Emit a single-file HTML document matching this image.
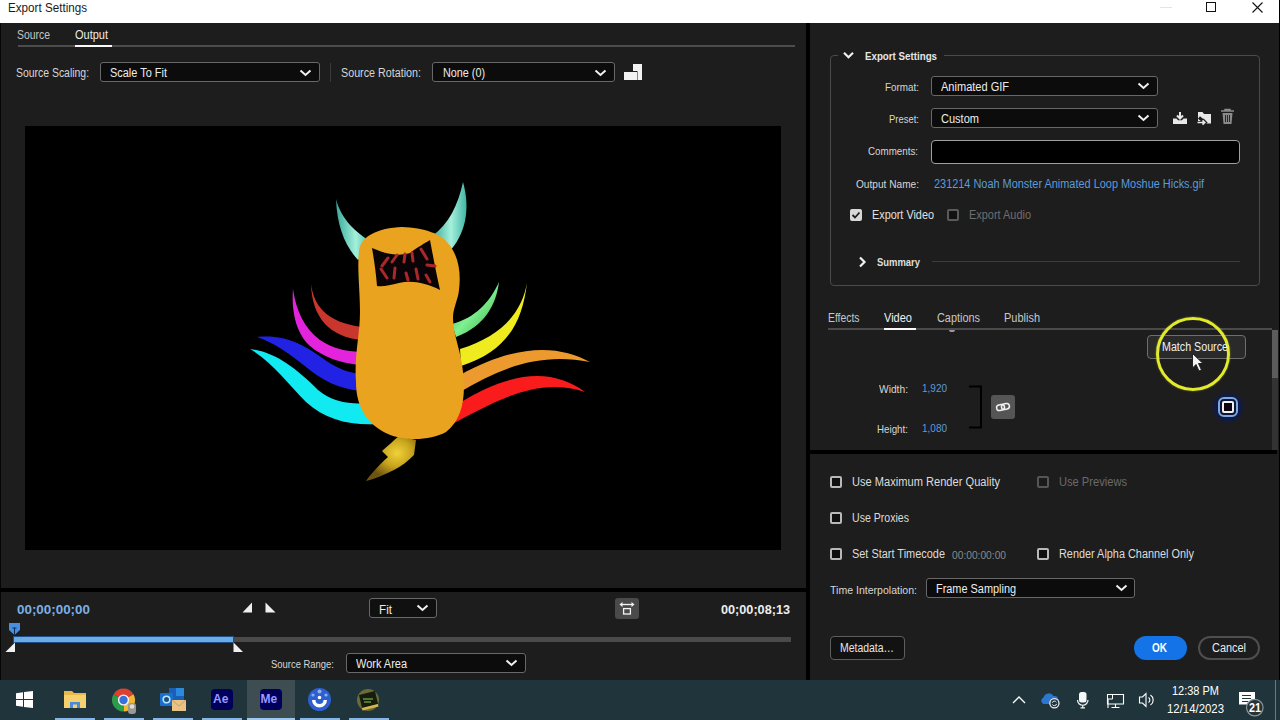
<!DOCTYPE html>
<html><head><meta charset="utf-8">
<style>
*{margin:0;padding:0;box-sizing:border-box}
html,body{width:1280px;height:720px;overflow:hidden;background:#1d1d1d;font-family:'Liberation Sans', sans-serif}
.a{position:absolute}
.t{position:absolute;white-space:nowrap;transform-origin:0 0}
.dd{position:absolute;background:#0c0c0c;border:1px solid #686868;border-radius:3px}
.cb{position:absolute;width:12px;height:12px;border:2px solid #b8b8b8;border-radius:2px;background:#0f0f0f}
</style></head><body>
<!-- title bar -->
<div class="a" style="left:0;top:0;width:1280px;height:23px;background:#ffffff"></div>
<div class="a" style="left:1160px;top:7px;width:12px;height:1px;background:#e4e4e4"></div>
<div class="a" style="left:1206px;top:2px;width:10px;height:10px;border:1px solid #111"></div>
<svg class="a" style="left:1251px;top:1px" width="13" height="13" viewBox="0 0 13 13"><path d="M1.5 1.5L11.5 11.5M11.5 1.5L1.5 11.5" stroke="#111" stroke-width="1.1"/></svg>

<!-- window borders -->
<div class="a" style="left:0;top:23px;width:1px;height:657px;background:#050505"></div>
<div class="a" style="left:1279px;top:0;width:1px;height:680px;background:#000"></div>

<!-- dividers -->
<div class="a" style="left:806px;top:23px;width:4px;height:657px;background:#000"></div>
<div class="a" style="left:0;top:588px;width:806px;height:4px;background:#000"></div>
<div class="a" style="left:810px;top:450px;width:467px;height:4px;background:#000"></div>

<!-- left tabs -->
<div class="a" style="left:18px;top:45px;width:777px;height:2px;background:#4c4c4c"></div>
<div class="a" style="left:75px;top:45px;width:37px;height:2px;background:#fafafa"></div>

<!-- source scaling / rotation -->
<div class="dd" style="left:100px;top:62px;width:220px;height:20px"></div>
<svg class="a" style="left:299px;top:69px" width="13" height="8" viewBox="0 0 13 8"><path d="M1.5 1.5L6.5 6L11.5 1.5" fill="none" stroke="#f0f0f0" stroke-width="2"/></svg>
<div class="a" style="left:330px;top:63px;width:1px;height:19px;background:#3a3a3a"></div>
<div class="dd" style="left:432px;top:62px;width:183px;height:20px"></div>
<svg class="a" style="left:594px;top:69px" width="13" height="8" viewBox="0 0 13 8"><path d="M1.5 1.5L6.5 6L11.5 1.5" fill="none" stroke="#f0f0f0" stroke-width="2"/></svg>
<svg class="a" style="left:623px;top:63px" width="20" height="18" viewBox="0 0 20 18"><rect x="10" y="1" width="9" height="16" fill="#f2f2f2"/><rect x="0.5" y="8" width="14" height="9" fill="#1d1d1d"/><rect x="1" y="9" width="13" height="8" fill="#f2f2f2"/></svg>

<!-- video area -->
<div class="a" style="left:25px;top:126px;width:756px;height:424px;background:#000"></div>

<!-- bottom-left controls -->
<svg class="a" style="left:242px;top:602px" width="11" height="11" viewBox="0 0 11 11"><path d="M10 0.5V10.5H0.5Z" fill="#f0f0f0"/></svg>
<svg class="a" style="left:265px;top:602px" width="11" height="11" viewBox="0 0 11 11"><path d="M0.5 0.5V10.5H10.5Z" fill="#f0f0f0"/></svg>
<div class="dd" style="left:369px;top:598px;width:68px;height:20px;background:#101010"></div>
<svg class="a" style="left:416px;top:604px" width="13" height="8" viewBox="0 0 13 8"><path d="M1.5 1.5L6.5 6L11.5 1.5" fill="none" stroke="#f0f0f0" stroke-width="2"/></svg>
<div class="a" style="left:615px;top:598px;width:24px;height:21px;background:#4a4a4a;border-radius:3px"></div>
<svg class="a" style="left:615px;top:598px" width="24" height="21" viewBox="0 0 24 21"><path d="M7 6.5H17" stroke="#f4f4f4" stroke-width="1.3"/><path d="M4.5 6.5L7.5 4V9ZM19.5 6.5L16.5 4V9Z" fill="#f4f4f4"/><rect x="8.6" y="10.6" width="6.8" height="5.4" fill="none" stroke="#f4f4f4" stroke-width="1.3"/></svg>

<!-- timeline -->
<div class="a" style="left:14px;top:637px;width:777px;height:5px;background:#4a4a4a"></div>
<div class="a" style="left:13px;top:636px;width:221px;height:7px;background:#1d4f86"></div>
<div class="a" style="left:14px;top:637px;width:219px;height:5px;background:#6aace8"></div>
<svg class="a" style="left:8px;top:622px" width="13" height="15" viewBox="0 0 13 15"><path d="M1 1H12V8L6.5 13L1 8Z" fill="#4a8ee0"/><path d="M4.5 6H8.5M6.5 6V13" stroke="#0c2a50" stroke-width="1"/></svg>
<svg class="a" style="left:5px;top:642px" width="11" height="11" viewBox="0 0 11 11"><path d="M10 0.5V10H0.5Z" fill="#f0f0f0"/></svg>
<svg class="a" style="left:233px;top:642px" width="11" height="11" viewBox="0 0 11 11"><path d="M0.5 0.5V10H10Z" fill="#f0f0f0"/></svg>
<div class="dd" style="left:346px;top:653px;width:180px;height:20px"></div>
<svg class="a" style="left:505px;top:659px" width="13" height="8" viewBox="0 0 13 8"><path d="M1.5 1.5L6.5 6L11.5 1.5" fill="none" stroke="#f0f0f0" stroke-width="2"/></svg>

<!-- export settings box -->
<div class="a" style="left:830px;top:55px;width:430px;height:231px;border:1px solid #4a4a4a;border-radius:4px"></div>
<div class="a" style="left:838px;top:50px;width:106px;height:10px;background:#1d1d1d"></div>
<svg class="a" style="left:842px;top:51px" width="13" height="9" viewBox="0 0 13 9"><path d="M2 1.8L6.5 6.3L11 1.8" fill="none" stroke="#f0f0f0" stroke-width="2.2"/></svg>
<div class="dd" style="left:931px;top:76px;width:227px;height:20px"></div>
<svg class="a" style="left:1137px;top:82px" width="13" height="8" viewBox="0 0 13 8"><path d="M1.5 1.5L6.5 6L11.5 1.5" fill="none" stroke="#f0f0f0" stroke-width="2"/></svg>
<div class="dd" style="left:931px;top:108px;width:227px;height:20px"></div>
<svg class="a" style="left:1137px;top:114px" width="13" height="8" viewBox="0 0 13 8"><path d="M1.5 1.5L6.5 6L11.5 1.5" fill="none" stroke="#f0f0f0" stroke-width="2"/></svg>
<!-- preset icons -->
<svg class="a" style="left:1172px;top:109px" width="16" height="16" viewBox="0 0 16 16"><path d="M8 3V9M5 6.5L8 9.5L11 6.5" fill="none" stroke="#e8e8e8" stroke-width="2"/><path d="M1 9.5H4.5L6 11.2H10L11.5 9.5H15V15H1Z" fill="#e8e8e8"/></svg>
<svg class="a" style="left:1196px;top:109px" width="17" height="17" viewBox="0 0 17 17"><path d="M2 3H6.5L8 5H15V14.5H2Z" fill="#e8e8e8"/><path d="M3 8.5L9 13.5M1 13.5H9M6.5 10.5L9.5 13.5L6.5 16.5" fill="none" stroke="#1d1d1d" stroke-width="3"/><path d="M1.5 13.5H8.5M6.5 11.3L8.8 13.5L6.5 15.7" fill="none" stroke="#e8e8e8" stroke-width="1.6"/></svg>
<svg class="a" style="left:1220px;top:108px" width="15" height="17" viewBox="0 0 15 17"><path d="M1 3H14M5 3V1.5H10V3" fill="none" stroke="#8a8a8a" stroke-width="1.5"/><path d="M2.5 5H12.5L11.5 16H3.5Z" fill="#8a8a8a"/><path d="M5.5 7V14M7.5 7V14M9.5 7V14" stroke="#1d1d1d" stroke-width="0.9"/></svg>
<div class="a" style="left:931px;top:140px;width:309px;height:24px;background:#000;border:1px solid #a0a0a0;border-radius:4px"></div>
<!-- export video/audio checkboxes -->
<div class="a" style="left:850px;top:209px;width:12px;height:12px;background:#d8d8d8;border-radius:2px"></div>
<svg class="a" style="left:850px;top:209px" width="12" height="12" viewBox="0 0 12 12"><path d="M2.5 6L5 8.5L9.5 3.5" fill="none" stroke="#1d1d1d" stroke-width="1.8"/></svg>
<div class="cb" style="left:947px;top:209px;border-color:#5a5a5a;background:#121212"></div>
<!-- summary -->
<svg class="a" style="left:858px;top:256px" width="9" height="12" viewBox="0 0 9 12"><path d="M2 1.5L6.5 6L2 10.5" fill="none" stroke="#f0f0f0" stroke-width="2.2"/></svg>
<div class="a" style="left:932px;top:260.5px;width:308px;height:1.5px;background:#3c3c3c"></div>

<!-- right tabs -->
<div class="a" style="left:828px;top:328px;width:444px;height:2px;background:#4a4a4a"></div>
<div class="a" style="left:884px;top:328px;width:32px;height:2px;background:#fafafa"></div>
<div class="a" style="left:949px;top:330px;width:6px;height:2px;background:#9a9a9a;border-radius:0 0 3px 3px"></div>
<!-- scrollbar -->
<div class="a" style="left:1272px;top:330px;width:6px;height:120px;background:#333"></div>
<div class="a" style="left:1272px;top:330px;width:6px;height:48px;background:#5c5c5c"></div>

<!-- match source -->
<div class="a" style="left:1147px;top:335px;width:99px;height:24px;background:#2a2a2a;border:1px solid #6e6e6e;border-radius:4px"></div>
<!-- bracket -->
<svg class="a" style="left:968px;top:384px" width="16" height="46" viewBox="0 0 16 46"><path d="M1 2.5H13V43.5H1" fill="none" stroke="#000" stroke-width="2"/></svg>
<div class="a" style="left:991px;top:395px;width:24px;height:24px;background:#555;border-radius:3px"></div>
<svg class="a" style="left:991px;top:395px" width="24" height="24" viewBox="0 0 24 24"><g transform="rotate(-12 12 12)"><rect x="5.5" y="9.2" width="8" height="5.6" rx="2.8" fill="none" stroke="#f0f0f0" stroke-width="1.5"/><rect x="10.5" y="9.2" width="8" height="5.6" rx="2.8" fill="none" stroke="#f0f0f0" stroke-width="1.5"/></g></svg>
<!-- toggle icon -->
<div class="a" style="left:1211px;top:391px;width:34px;height:33px;border-radius:10px;background:radial-gradient(#0c1a50 45%,rgba(20,16,80,0) 72%)"></div>
<div class="a" style="left:1218px;top:397px;width:20px;height:20px;border:2px solid #7ea8dc;border-radius:6px;background:#0a1636"></div>
<div class="a" style="left:1222px;top:401px;width:12px;height:12px;border:2px solid #f0f0f0;border-radius:2px;background:#0a0510"></div>

<!-- bottom-right checkboxes -->
<div class="cb" style="left:830px;top:476px"></div>
<div class="cb" style="left:1037px;top:476px;border-color:#555;background:#1a1a1a"></div>
<div class="cb" style="left:830px;top:512px"></div>
<div class="cb" style="left:830px;top:548px"></div>
<div class="cb" style="left:1037px;top:548px"></div>
<div class="dd" style="left:926px;top:578px;width:209px;height:20px"></div>
<svg class="a" style="left:1115px;top:584px" width="13" height="8" viewBox="0 0 13 8"><path d="M1.5 1.5L6.5 6L11.5 1.5" fill="none" stroke="#f0f0f0" stroke-width="2"/></svg>
<!-- buttons -->
<div class="a" style="left:830px;top:636px;width:75px;height:24px;border:1px solid #5e5e5e;border-radius:4px;background:#121212"></div>
<div class="a" style="left:1134px;top:636px;width:53px;height:24px;border-radius:12px;background:#1473e6"></div>
<div class="a" style="left:1198px;top:636px;width:62px;height:24px;border:2px solid #4e4e4e;border-radius:12px"></div>

<!-- yellow highlight + cursor -->
<div class="a" style="left:1156px;top:317px;width:74px;height:74px;border:3px solid #e2ea2c;border-radius:50%;box-shadow:0 0 2px rgba(226,234,44,.5)"></div>
<svg class="a" style="left:1191px;top:352px" width="14" height="22" viewBox="0 0 14 22"><path d="M1.5 1.5V16L5 12.5L8 19L10.5 18L7.5 11.5H12Z" fill="#f4f4f4" stroke="#222" stroke-width="1"/></svg>

<!-- taskbar -->
<div class="a" style="left:0;top:680px;width:1280px;height:40px;background:#20353b"></div>
<div class="a" style="left:247px;top:680px;width:48px;height:40px;background:#3d4d52"></div>
<!-- indicators -->
<div class="a" style="left:55px;top:718px;width:40px;height:2px;background:#86b6e6"></div>
<div class="a" style="left:104px;top:718px;width:40px;height:2px;background:#86b6e6"></div>
<div class="a" style="left:153px;top:718px;width:40px;height:2px;background:#86b6e6"></div>
<div class="a" style="left:202px;top:718px;width:40px;height:2px;background:#86b6e6"></div>
<div class="a" style="left:247px;top:718px;width:48px;height:2px;background:#9cc8f0"></div>
<div class="a" style="left:300px;top:718px;width:40px;height:2px;background:#86b6e6"></div>
<div class="a" style="left:349px;top:718px;width:40px;height:2px;background:#86b6e6"></div>
<!-- windows logo -->
<svg class="a" style="left:16px;top:691px" width="17" height="17" viewBox="0 0 17 17"><path d="M0 2.3L7 1.3V8H0ZM8 1.1L17 0V8H8ZM0 9H7V15.7L0 14.7ZM8 9H17V17L8 15.9Z" fill="#fff"/></svg>
<!-- explorer -->
<svg class="a" style="left:63px;top:689px" width="24" height="20" viewBox="0 0 24 20"><path d="M1 2H9L11 4H23V19H1Z" fill="#e6b94a"/><rect x="1" y="6" width="22" height="13" fill="#f4d16e"/><path d="M7 19V13H17V19H14V15.5H10V19Z" fill="#4a8ad8"/></svg>
<!-- chrome -->
<svg class="a" style="left:111px;top:688px" width="26" height="27" viewBox="0 0 26 27"><path d="M12.5,12 L2.54,6.25 A11.5,11.5 0 0 1 22.46,6.25 Z" fill="#dc4030"/><path d="M12.5,12 L22.46,6.25 A11.5,11.5 0 0 1 12.5,23.5 Z" fill="#f2b832"/><path d="M12.5,12 L12.5,23.5 A11.5,11.5 0 0 1 2.54,6.25 Z" fill="#2c9c48"/><circle cx="12.5" cy="12" r="5.6" fill="#f4f4f4"/><circle cx="12.5" cy="12" r="4.2" fill="#3a70d8"/><rect x="17" y="15" width="8" height="11" rx="3" fill="#9a9890"/><circle cx="21" cy="18.5" r="2.3" fill="#e0ddd4"/></svg>
<!-- outlook -->
<svg class="a" style="left:159px;top:687px" width="28" height="26" viewBox="0 0 28 26"><rect x="10" y="1" width="15" height="16" fill="#1a5fb4"/><rect x="17" y="1" width="8" height="8" fill="#2a8ae0"/><rect x="1" y="6" width="13" height="13" rx="1" fill="#1a6ed0"/><circle cx="7.5" cy="12.5" r="3.3" fill="#1a4f8a" stroke="#b8e8ff" stroke-width="1.6"/><rect x="13" y="13" width="14" height="11" fill="#e8c383"/><path d="M13 13L20 19L27 13" fill="none" stroke="#c9a062" stroke-width="1"/></svg>
<!-- Ae -->
<div class="a" style="left:211px;top:689px;width:22px;height:21px;background:#00005b;border-radius:4px"></div>
<div class="t" style="left:213px;top:693px;font-size:12px;line-height:12px;font-weight:700;color:#9999ff">Ae</div>
<!-- Me -->
<div class="a" style="left:260px;top:689px;width:22px;height:21px;background:#00005b;border-radius:4px"></div>
<div class="t" style="left:260.5px;top:693px;font-size:12px;line-height:12px;font-weight:700;color:#9999ff">Me</div>
<!-- blue circle app -->
<svg class="a" style="left:307px;top:687px" width="25" height="25" viewBox="0 0 25 25"><circle cx="12.5" cy="12.5" r="11.5" fill="#2c5fd0"/><path d="M5 13A7.5 7.5 0 0 0 20 13H16.5A4 4 0 0 1 8.5 13Z" fill="#fff"/><circle cx="12.5" cy="10.5" r="1.8" fill="#fff"/><circle cx="12.5" cy="4.5" r="2" fill="#8fb0f0"/><circle cx="6" cy="8" r="1.6" fill="#8fb0f0"/><circle cx="19" cy="8" r="1.6" fill="#8fb0f0"/></svg>
<!-- green app -->
<svg class="a" style="left:355px;top:687px" width="26" height="26" viewBox="0 0 26 26"><circle cx="13" cy="13" r="11" fill="#6b6b3a"/><path d="M4 8L20 4L23 17L7 21Z" fill="#161c10"/><path d="M7 21L23 17L23.5 19.5L7.5 23.5Z" fill="#d8b84a"/><path d="M8 12H18M9 15H16" stroke="#8fd04a" stroke-width="1.2"/></svg>

<!-- tray -->
<svg class="a" style="left:1012px;top:695px" width="14" height="9" viewBox="0 0 14 9"><path d="M1 8L7 2L13 8" fill="none" stroke="#fff" stroke-width="1.3"/></svg>
<svg class="a" style="left:1040px;top:690px" width="20" height="20" viewBox="0 0 20 20"><path d="M3.5 14A3.5 3.5 0 0 1 3.5 7.5A5.5 5.5 0 0 1 13.5 6A4 4 0 0 1 15 14Z" fill="#2d78cc"/><circle cx="14.4" cy="13.3" r="4.6" fill="#20353b" stroke="#e8eef2" stroke-width="1.3"/><path d="M12.2 12.8A2.3 2.3 0 0 1 16.4 12.2M16.6 13.9A2.3 2.3 0 0 1 12.3 14.4" fill="none" stroke="#e8eef2" stroke-width="1"/></svg>
<svg class="a" style="left:1076px;top:691px" width="14" height="18" viewBox="0 0 14 18"><rect x="3" y="1" width="7.5" height="10.5" rx="2.5" fill="#f4f6f8"/><path d="M1.5 9A5.25 5.25 0 0 0 12 9M6.75 14.5V16.5M4.5 16.8H9" fill="none" stroke="#f4f6f8" stroke-width="1.2"/></svg>
<svg class="a" style="left:1106px;top:693px" width="19" height="16" viewBox="0 0 19 16"><path d="M1.5 1.5H17.5V11H1.5Z" fill="none" stroke="#fff" stroke-width="1.1"/><path d="M9.5 11V14.5M5.5 14.5H13.5M2 6V15" stroke="#fff" stroke-width="1.1"/><path d="M1.5 1.5H6.5V6H1.5Z" fill="#20353b" stroke="#fff" stroke-width="1"/></svg>
<svg class="a" style="left:1138px;top:692px" width="17" height="16" viewBox="0 0 17 16"><path d="M1.5 5H4.5L8 1.5V14.5L4.5 11H1.5Z" fill="none" stroke="#fff" stroke-width="1.1"/><path d="M10.5 5.5A3 3 0 0 1 10.5 10.5M12.5 3A6 6 0 0 1 12.5 13" fill="none" stroke="#fff" stroke-width="1.1"/></svg>
<svg class="a" style="left:1238px;top:691px" width="28" height="28" viewBox="0 0 28 28"><path d="M1 1H17V13.5H1Z" fill="#fff"/><path d="M4 4.5H13M4 7.5H13M4 10.5H10" stroke="#20353b" stroke-width="1.2"/><circle cx="16.8" cy="16.6" r="8.3" fill="#26343a" stroke="#8c9496" stroke-width="1.2"/></svg>
<div class="t" style="left:1248.5px;top:701.5px;font-size:12px;line-height:12px;font-weight:700;color:#fff;transform:scaleX(.9)">21</div>
<div class="a" style="left:1275px;top:680px;width:1px;height:40px;background:#6a7a80"></div>

<svg class="a" style="left:25px;top:126px" width="756" height="424" viewBox="25 126 756 424">
<defs>
<linearGradient id="hornL" x1="0" y1="0" x2="1" y2="0"><stop offset="0" stop-color="#38a898"/><stop offset=".55" stop-color="#a4f0dc"/><stop offset="1" stop-color="#40b4a4"/></linearGradient>
<linearGradient id="grn" x1="0" y1="0" x2="1" y2="1"><stop offset="0" stop-color="#30b04a"/><stop offset=".5" stop-color="#80f090"/><stop offset="1" stop-color="#2ea848"/></linearGradient>
<radialGradient id="bolt" cx=".62" cy=".38" r=".6"><stop offset="0" stop-color="#f0d23a"/><stop offset=".5" stop-color="#c8a41c"/><stop offset="1" stop-color="#6e5410"/></radialGradient>
</defs>
<path d="M336,199 C337,226 345,246 358,260 L372,242 C356,233 341,219 336,199 Z" fill="url(#hornL)"/>
<path d="M463,182 C471,210 465,235 449,252 L432,236 C449,224 458,205 463,182 Z" fill="url(#hornL)"/>
<path d="M311,284 C314,305 325,322 362,327 L362,340 C330,337 312,318 311,284 Z" fill="#c8362e"/>
<path d="M293,289 C296,310 304,328 320,340 C333,349 346,351 360,352 L360,365 C340,363 323,357 310,346 C298,335 291,315 293,289 Z" fill="#e424dc"/>
<path d="M257,337 C285,334 305,345 325,360 C340,370 350,373 362,374 L362,391 C338,389 322,380 306,367 C290,354 275,343 257,337 Z" fill="#2222e4"/>
<path d="M250,349 C275,352 296,368 318,390 C335,404 352,404 370,403 L380,424 C350,426 326,420 306,402 C288,384 272,362 250,349 Z" fill="#12eaf2"/>
<path d="M499,282 C496,305 485,326 456,337 L452,324 C475,318 490,302 499,282 Z" fill="url(#grn)"/>
<path d="M527,283 C522,310 505,335 460,349 L461,366 C505,352 522,325 527,283 Z" fill="#eeec1e"/>
<path d="M590,362 C560,346 520,342 460,375 L460,392 C500,368 540,352 590,362 Z" fill="#ec9a2e"/>
<path d="M585,392 C555,370 515,368 458,404 L450,425 C490,405 535,375 585,392 Z" fill="#fa1c1c"/>
<path d="M366,481 C371,474 378,466 388,457 L382,451 C388,446 394,440 399,436 L416,440 L414,455 C408,461 402,466 394,470 C384,475 374,479 366,481 Z" fill="url(#bolt)"/>
<path d="M359,252 C360,236 378,228 402,227 C424,228 442,233 451,247 C459,259 461,274 459,290 C458,300 453,308 453,318 C453,335 461,350 463,372 C466,398 462,420 446,432 C430,441 404,441 388,434 C368,425 356,408 356,382 C354,355 360,335 360,312 C360,290 357,268 359,252 Z" fill="#e9a31f"/>
<path d="M372,248 C384,253 396,257 410,253 C418,247 425,243 430,240 C433,256 436,272 440,290 C426,283 412,280 399,283 C390,285 383,287 377,286 C376,272 374,260 372,248 Z" fill="#0a0406"/>
<g stroke="#a8282c" stroke-width="3" stroke-linecap="round">
<path d="M382,266L388,258M392,262L397,255M404,262L405,254M413,261L412,253M421,249L427,259M427,265L435,266"/>
<path d="M381,269L387,278M395,268L394,278M406,273L408,280M416,269L418,279M426,275L430,282"/>
</g>
</svg>

<div class="t" style="left:8px;top:2.12px;font-size:12.5px;line-height:12.5px;font-weight:400;color:#1a1a1a;transform:scaleX(0.932)">Export Settings</div>
<div class="t" style="left:17px;top:28.84px;font-size:12px;line-height:12px;font-weight:400;color:#c4c4c4;transform:scaleX(0.868)">Source</div>
<div class="t" style="left:75px;top:28.84px;font-size:12px;line-height:12px;font-weight:400;color:#ececec;transform:scaleX(0.916)">Output</div>
<div class="t" style="left:16px;top:66.84px;font-size:12px;line-height:12px;font-weight:400;color:#d6d6d6;transform:scaleX(0.869)">Source Scaling:</div>
<div class="t" style="left:110px;top:66.84px;font-size:12px;line-height:12px;font-weight:400;color:#ececec;transform:scaleX(0.912)">Scale To Fit</div>
<div class="t" style="left:341px;top:66.84px;font-size:12px;line-height:12px;font-weight:400;color:#d6d6d6;transform:scaleX(0.895)">Source Rotation:</div>
<div class="t" style="left:443px;top:66.84px;font-size:12px;line-height:12px;font-weight:400;color:#ececec;transform:scaleX(0.900)">None (0)</div>
<div class="t" style="left:17px;top:603.84px;font-size:12px;line-height:12px;font-weight:700;color:#7cb0e4;transform:scaleX(1.116)">00;00;00;00</div>
<div class="t" style="left:379px;top:603.84px;font-size:12px;line-height:12px;font-weight:400;color:#ececec;transform:scaleX(0.974)">Fit</div>
<div class="t" style="left:721px;top:603.84px;font-size:12px;line-height:12px;font-weight:700;color:#eeeeee;transform:scaleX(1.055)">00;00;08;13</div>
<div class="t" style="left:271px;top:658.69px;font-size:11px;line-height:11px;font-weight:400;color:#d6d6d6;transform:scaleX(0.858)">Source Range:</div>
<div class="t" style="left:356px;top:657.84px;font-size:12px;line-height:12px;font-weight:400;color:#ececec;transform:scaleX(0.914)">Work Area</div>
<div class="t" style="left:865px;top:50.69px;font-size:11px;line-height:11px;font-weight:700;color:#e6e6e6;transform:scaleX(0.886)">Export Settings</div>
<div class="t" style="left:885px;top:81.69px;font-size:11px;line-height:11px;font-weight:400;color:#d6d6d6;transform:scaleX(0.897)">Format:</div>
<div class="t" style="left:941px;top:80.84px;font-size:12px;line-height:12px;font-weight:400;color:#ececec;transform:scaleX(0.919)">Animated GIF</div>
<div class="t" style="left:889px;top:113.69px;font-size:11px;line-height:11px;font-weight:400;color:#d6d6d6;transform:scaleX(0.861)">Preset:</div>
<div class="t" style="left:941px;top:112.84px;font-size:12px;line-height:12px;font-weight:400;color:#ececec;transform:scaleX(0.919)">Custom</div>
<div class="t" style="left:868px;top:145.69px;font-size:11px;line-height:11px;font-weight:400;color:#d6d6d6;transform:scaleX(0.889)">Comments:</div>
<div class="t" style="left:856px;top:178.69px;font-size:11px;line-height:11px;font-weight:400;color:#d6d6d6;transform:scaleX(0.920)">Output Name:</div>
<div class="t" style="left:934px;top:177.84px;font-size:12px;line-height:12px;font-weight:400;color:#5c9bd9;transform:scaleX(0.910)">231214 Noah Monster Animated Loop Moshue Hicks.gif</div>
<div class="t" style="left:872px;top:208.84px;font-size:12px;line-height:12px;font-weight:400;color:#e0e0e0;transform:scaleX(0.905)">Export Video</div>
<div class="t" style="left:969px;top:208.84px;font-size:12px;line-height:12px;font-weight:400;color:#6e6e6e;transform:scaleX(0.911)">Export Audio</div>
<div class="t" style="left:877px;top:256.69px;font-size:11px;line-height:11px;font-weight:700;color:#dedede;transform:scaleX(0.858)">Summary</div>
<div class="t" style="left:828px;top:311.84px;font-size:12px;line-height:12px;font-weight:400;color:#c8c8c8;transform:scaleX(0.864)">Effects</div>
<div class="t" style="left:884px;top:311.84px;font-size:12px;line-height:12px;font-weight:400;color:#f0f0f0;transform:scaleX(0.919)">Video</div>
<div class="t" style="left:937px;top:311.84px;font-size:12px;line-height:12px;font-weight:400;color:#c8c8c8;transform:scaleX(0.908)">Captions</div>
<div class="t" style="left:1004px;top:311.84px;font-size:12px;line-height:12px;font-weight:400;color:#c8c8c8;transform:scaleX(0.915)">Publish</div>
<div class="t" style="left:1162px;top:340.84px;font-size:12px;line-height:12px;font-weight:400;color:#f0f0f0;transform:scaleX(0.891)">Match Source</div>
<div class="t" style="left:879px;top:383.69px;font-size:11px;line-height:11px;font-weight:400;color:#d6d6d6;transform:scaleX(0.930)">Width:</div>
<div class="t" style="left:922px;top:382.69px;font-size:11px;line-height:11px;font-weight:400;color:#5c9bd9;transform:scaleX(0.908)">1,920</div>
<div class="t" style="left:877px;top:423.69px;font-size:11px;line-height:11px;font-weight:400;color:#d6d6d6;transform:scaleX(0.889)">Height:</div>
<div class="t" style="left:922px;top:422.69px;font-size:11px;line-height:11px;font-weight:400;color:#5c9bd9;transform:scaleX(0.908)">1,080</div>
<div class="t" style="left:852px;top:475.84px;font-size:12px;line-height:12px;font-weight:400;color:#dcdcdc;transform:scaleX(0.925)">Use Maximum Render Quality</div>
<div class="t" style="left:1059px;top:475.84px;font-size:12px;line-height:12px;font-weight:400;color:#6a6a6a;transform:scaleX(0.927)">Use Previews</div>
<div class="t" style="left:852px;top:511.84px;font-size:12px;line-height:12px;font-weight:400;color:#dcdcdc;transform:scaleX(0.881)">Use Proxies</div>
<div class="t" style="left:852px;top:547.84px;font-size:12px;line-height:12px;font-weight:400;color:#dcdcdc;transform:scaleX(0.911)">Set Start Timecode</div>
<div class="t" style="left:952px;top:550.11px;font-size:10.5px;line-height:10.5px;font-weight:400;color:#8a8a8a;transform:scaleX(0.974)">00:00:00:00</div>
<div class="t" style="left:1059px;top:547.84px;font-size:12px;line-height:12px;font-weight:400;color:#dcdcdc;transform:scaleX(0.907)">Render Alpha Channel Only</div>
<div class="t" style="left:830px;top:584.69px;font-size:11px;line-height:11px;font-weight:400;color:#d6d6d6;transform:scaleX(0.959)">Time Interpolation:</div>
<div class="t" style="left:936px;top:582.84px;font-size:12px;line-height:12px;font-weight:400;color:#ececec;transform:scaleX(0.909)">Frame Sampling</div>
<div class="t" style="left:840px;top:641.84px;font-size:12px;line-height:12px;font-weight:400;color:#e6e6e6;transform:scaleX(0.870)">Metadata…</div>
<div class="t" style="left:1152px;top:641.84px;font-size:12px;line-height:12px;font-weight:700;color:#ffffff;transform:scaleX(0.833)">OK</div>
<div class="t" style="left:1212px;top:641.84px;font-size:12px;line-height:12px;font-weight:400;color:#ececec;transform:scaleX(0.910)">Cancel</div>
<div class="t" style="left:1172px;top:684.84px;font-size:12px;line-height:12px;font-weight:400;color:#ffffff;transform:scaleX(0.915)">12:38 PM</div>
<div class="t" style="left:1167px;top:702.84px;font-size:12px;line-height:12px;font-weight:400;color:#ffffff;transform:scaleX(0.949)">12/14/2023</div>
</body></html>
